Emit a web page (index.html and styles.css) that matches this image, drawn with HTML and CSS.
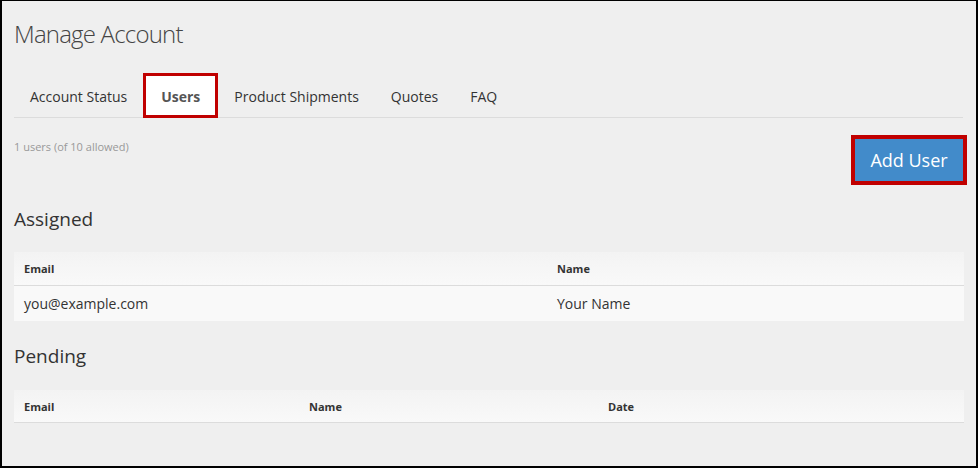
FILE: index.html
```html
<!DOCTYPE html>
<html>
<head>
<meta charset="utf-8">
<link rel="stylesheet" href="styles.css">
</head>
<body>
<div class="frame">
  <h1 class="title">Manage Account</h1>
  <ul class="tabs">
    <li class="tab">Account Status</li>
    <li class="tab active">Users</li>
    <li class="tab">Product Shipments</li>
    <li class="tab">Quotes</li>
    <li class="tab">FAQ</li>
  </ul>
  <div class="toolbar">
    <div class="count">1 users (of 10 allowed)</div>
    <button class="add-btn">Add User</button>
  </div>
  <h2 class="section">Assigned</h2>
  <table class="grid assigned">
    <thead>
      <tr><th class="c-email">Email</th><th>Name</th></tr>
    </thead>
    <tbody>
      <tr><td>you@example.com</td><td>Your Name</td></tr>
    </tbody>
  </table>
  <h2 class="section pending-title">Pending</h2>
  <table class="grid pending">
    <thead>
      <tr><th class="p-email">Email</th><th class="p-name">Name</th><th>Date</th></tr>
    </thead>
  </table>
</div>
</body>
</html>
```
FILE: styles.css
```css
html, body {
  margin: 0;
  padding: 0;
}
body {
  font-family: "Open Sans", "Liberation Sans", sans-serif;
  color: #333;
}
.frame {
  box-sizing: border-box;
  width: 978px;
  height: 468px;
  border-style: solid;
  border-color: #000;
  border-width: 1px 2px 2px 2px;
  background: #efefef;
  padding: 0 13px 0 12px;
  overflow: hidden;
}
.title {
  margin: 17px 0 0 0;
  font-size: 24px;
  font-weight: 300;
  line-height: 32px;
  color: #444;
  letter-spacing: -0.8px;
}
.tabs {
  list-style: none;
  margin: 23px 0 0 0;
  padding: 0;
  display: flex;
  align-items: flex-start;
  border-bottom: 1px solid #dcdcdc;
}
.tab {
  padding: 14px 16px 10px 16px;
  font-size: 14px;
  line-height: 20px;
  color: #333;
}
.tab.active {
  background: #fff;
  border: 3px solid #c00000;
  padding: 11px 15px 8px 15px;
  margin-bottom: -1px;
  font-weight: 700;
  color: #555;
}
.toolbar {
  display: flex;
  justify-content: space-between;
  align-items: flex-start;
  margin-top: 21px;
}
.count {
  font-size: 11px;
  line-height: 16px;
  color: #999;
}
.add-btn {
  font-family: "Open Sans", "Liberation Sans", sans-serif;
  border: 0;
  outline: 4px solid #c00000;
  background: #428bca;
  color: #fff;
  font-size: 18px;
  line-height: 42px;
  height: 42px;
  width: 108px;
  padding: 0;
}
.section {
  margin: 25px 0 0 0;
  font-size: 19px;
  font-weight: 400;
  line-height: 26px;
  color: #333;
}
.pending-title {
  margin-top: 22px;
}
.grid {
  width: 950px;
  border-collapse: collapse;
  margin-top: 20px;
}
.pending {
  margin-top: 21px;
}
.grid th {
  text-align: left;
  font-size: 11px;
  font-weight: 700;
  color: #333;
  height: 33px;
  padding: 0 10px;
  background: linear-gradient(#f3f3f3, #f9f9f9);
  border-bottom: 1px solid #dcdcdc;
}
.pending th {
  height: 32px;
}
.grid td {
  font-size: 14px;
  color: #333;
  height: 35px;
  padding: 0 10px;
  background: #f9f9f9;
}
.c-email { width: 513px; }
.p-email { width: 265px; }
.p-name { width: 279px; }
```
